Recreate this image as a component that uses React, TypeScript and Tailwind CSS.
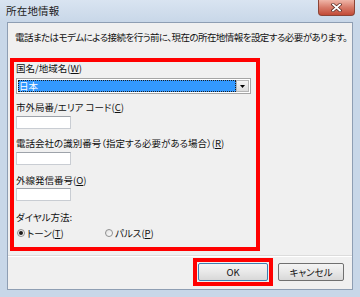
import React from "react";

const jp = "font-['Noto_Sans_CJK_JP',sans-serif] [font-feature-settings:'palt']";

const Field = ({ className = "" }: { className?: string }) => (
    <div className={`w-[55px] h-[13px] bg-white border border-[#c9cdd3] border-t-[#9ea3aa] ${className}`} />
);

const Radio = ({ checked }: { checked?: boolean }) => (
    <span className="w-[8px] h-[8px] rounded-full border border-[#8e8f8f] bg-gradient-to-br from-[#e0e0e0] to-white flex items-center justify-center shrink-0">
        {checked && <span className="w-[4px] h-[4px] rounded-full bg-[#1c1c1c]" />}
    </span>
);

const App = () => {
    return (
        <div className={`w-[360px] h-[297px] bg-[#c8d7e8] flex flex-col text-[#111] ${jp}`}>
            {/* title bar */}
            <div className="h-[22px] flex items-start bg-gradient-to-b from-[#d9e4f1] to-[#c8d7e8]">
                <span className="pl-[6px] pt-[5px] text-[10.5px] leading-[12px] tracking-[0.2px] text-[#222]">所在地情報</span>
                <div className="ml-auto mr-[5px] w-[37px] h-[16px] rounded-b-[4px] border border-t-0 border-[#8c4436] bg-gradient-to-b from-[#efb5a8] via-[#d77a69] to-[#c24a36] flex items-center justify-center">
                    <svg width="11" height="9" viewBox="0 0 11 9">
                        <path d="M2 1.5 L9 7.5 M9 1.5 L2 7.5" stroke="#5a2a22" strokeWidth="3.2" strokeLinecap="square" />
                        <path d="M2 1.5 L9 7.5 M9 1.5 L2 7.5" stroke="#ffffff" strokeWidth="1.8" strokeLinecap="square" />
                    </svg>
                </div>
            </div>

            {/* client area */}
            <div className="mx-[7px] h-[268px] border border-[#8e9eb3] bg-[#f0f0f0] flex flex-col text-[9.5px] leading-[12px]">
                <p className="pl-[7px] pt-[8px] tracking-[-0.55px] whitespace-nowrap">
                    電話またはモデムによる接続を行う前に、現在の所在地情報を設定する必要があります。
                </p>

                <div className="ml-[2px] mt-[15px] w-[250px] h-[193px] border-4 border-[#ff0000] px-[2px] flex flex-col">
                    <span>国名/地域名(<u>W</u>)</span>
                    <div className="mt-[4px] w-[235px] h-[16px] border border-[#a5a5a5] bg-white flex p-[1px]">
                        <div className="flex-1 bg-[#3399ff] text-white outline-1 outline-dotted outline-[#1d1d1d] outline-offset-[-1px] pl-[1px] leading-[12px]">日本</div>
                        <div className="w-[13px] border border-[#b5b5b5] bg-gradient-to-b from-[#f4f4f4] to-[#dcdcdc] flex items-center justify-center">
                            <svg width="5" height="3" viewBox="0 0 5 3"><path d="M0 0 H5 L2.5 3 Z" fill="#000" /></svg>
                        </div>
                    </div>

                    <span className="mt-[7px]">市外局番/エリア コード(<u>C</u>)</span>
                    <Field className="mt-[3px]" />

                    <span className="mt-[8px]">電話会社の識別番号（指定する必要がある場合）(<u>R</u>)</span>
                    <Field className="mt-[3px]" />

                    <span className="mt-[9px]">外線発信番号(<u>O</u>)</span>
                    <Field className="mt-[2px]" />

                    <span className="mt-[10px]">ダイヤル方法:</span>
                    <div className="mt-[4px] flex items-center">
                        <span className="ml-[1px] flex items-center gap-[2px] w-[88px]">
                            <Radio checked />
                            <span>トーン(<u>T</u>)</span>
                        </span>
                        <span className="flex items-center gap-[2px]">
                            <Radio />
                            <span>パルス(<u>P</u>)</span>
                        </span>
                    </div>
                </div>

                <div className="mt-[4px] flex-1 border-t border-[#dcdcdc] shadow-[inset_0_1px_0_#ffffff] flex items-center justify-end pr-[8px] pb-[1px]">
                    <div className="border-4 border-[#ff0000] p-[1px]">
                        <button className="w-[70px] h-[18px] rounded-[2px] border border-[#3c7fb1] bg-gradient-to-b from-[#f4f4f4] via-[#e8e8e8] to-[#d8d8d8] text-[9.5px] leading-[12px]">
                            OK
                        </button>
                    </div>
                    <button className="ml-[5px] w-[66px] h-[18px] rounded-[2px] border border-[#707070] bg-gradient-to-b from-[#f4f4f4] via-[#e8e8e8] to-[#d8d8d8] text-[9.5px] leading-[12px]">
                        キャンセル
                    </button>
                </div>
            </div>
        </div>
    );
};

export default App;
